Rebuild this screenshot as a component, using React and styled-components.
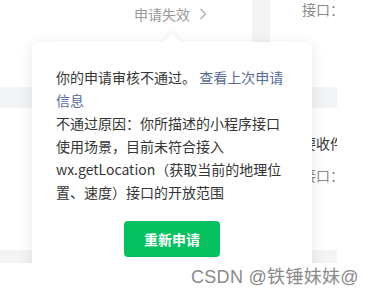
import React from "react";
import styled, { createGlobalStyle } from "styled-components";

const GlobalStyle = createGlobalStyle`
  body {
    margin: 0;
    background: #fff;
    font-family: "Noto Sans CJK SC", "Noto Sans", sans-serif;
  }
`;

export default function App() {
  return (
    <>
      <GlobalStyle />
      <Page>
        <Card>
          <Status>
            申请失效
            <svg width="8" height="12" viewBox="0 0 8 12">
              <polyline points="1.5,1 6.5,6 1.5,11" fill="none" stroke="#a8a8a8" strokeWidth="1.1" />
            </svg>
          </Status>
        </Card>
        <SideCard>
          <SideLine>接口：</SideLine>
        </SideCard>
        <Card />
        <SideCard $lower>
          <SideLine $dark>要收件</SideLine>
          <SideLine>接口：</SideLine>
        </SideCard>

        <Popover>
          <Arrow />
          <Text>
            你的申请审核不通过。 <Link>查看上次申请信息</Link>
          </Text>
          <Text>不通过原因：你所描述的小程序接口使用场景，目前未符合接入 wx.getLocation（获取当前的地理位置、速度）接口的开放范围</Text>
          <Button>重新申请</Button>
        </Popover>
      </Page>
      <Watermark>CSDN @铁锤妹妹@</Watermark>
    </>
  );
}

const Page = styled.div`
  position: relative;
  width: 337px;
  height: 263px;
  background: #f3f4f6;
  display: grid;
  grid-template-columns: 252px 67px;
  grid-template-rows: 87px 142px;
  column-gap: 18px;
  row-gap: 21px;
`;

const Card = styled.div`
  background: #fff;
`;

const Status = styled.div`
  display: flex;
  align-items: center;
  justify-content: flex-end;
  gap: 9px;
  padding: 4px 45px 0 0;
  height: 20px;
  font-size: 14px;
  color: #999;
`;

const SideCard = styled.div`
  background: #fff;
  padding: ${(p) => (p.$lower ? "24px" : "0")} 0 0 32px;
  display: flex;
  flex-direction: column;
  gap: 11px;
  overflow: hidden;
`;

const SideLine = styled.div`
  font-size: 14px;
  line-height: 23px;
  height: ${(p) => (p.$dark ? "23px" : "18px")};
  margin-top: ${(p) => (p.$dark ? "0" : "-2px")};
  white-space: nowrap;
  color: ${(p) => (p.$dark ? "#333" : "#888")};
`;

const Popover = styled.div`
  position: absolute;
  left: 32px;
  top: 42px;
  width: 280px;
  box-sizing: border-box;
  padding: 24px 24px 23px;
  background: #fff;
  border-radius: 6px;
  box-shadow: 0 2px 14px rgba(0, 0, 0, 0.1);
  display: flex;
  flex-direction: column;
`;

const Arrow = styled.div`
  position: absolute;
  top: -6px;
  left: 134px;
  width: 12px;
  height: 12px;
  background: #fff;
  transform: rotate(45deg);
  box-shadow: -3px -3px 6px rgba(0, 0, 0, 0.05);
`;

const Text = styled.p`
  margin: 0;
  font-size: 14px;
  line-height: 23px;
  color: #353535;
`;

const Link = styled.span`
  color: #576b95;
`;

const Button = styled.button`
  align-self: center;
  margin-top: 17px;
  width: 96px;
  height: 36px;
  border: none;
  border-radius: 4px;
  background: #07c160;
  color: #fff;
  font-family: inherit;
  font-size: 14px;
  font-weight: 700;
`;

const Watermark = styled.div`
  position: absolute;
  left: 191px;
  top: 265px;
  font-family: "Liberation Sans", "Noto Sans CJK SC", sans-serif;
  font-size: 18px;
  line-height: 24px;
  letter-spacing: 0.3px;
  color: #8a8a8a;
  text-shadow: 0 0 2px #fff;
  white-space: nowrap;
`;
